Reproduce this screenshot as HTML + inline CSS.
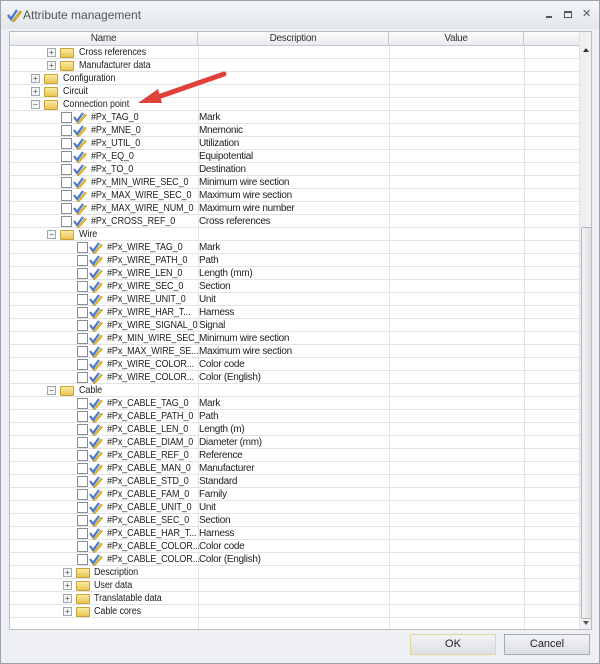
<!DOCTYPE html>
<html><head><meta charset="utf-8"><style>
*{margin:0;padding:0;box-sizing:border-box}
body{width:600px;height:664px;background:#fff;font-family:"Liberation Sans",sans-serif;font-size:10px;letter-spacing:-0.3px;color:#222;position:relative;overflow:hidden}
.win{position:absolute;left:0;top:0;width:600px;height:664px;background:#eef0f3;border:1px solid #9aa3ad}
.title{position:absolute;left:0;top:0;width:598px;height:28px;background:linear-gradient(#f4f6f8,#e2e6ea)}
.title span{position:absolute;left:22px;top:7px;font-size:12px;letter-spacing:0;color:#555}
.grid{position:absolute;left:8px;top:30px;width:583px;height:599px;background:#fff;border:1px solid #b9bec5;overflow:hidden}
.hdr{position:absolute;left:0;top:0;height:14px;width:570px;background:linear-gradient(#fbfbfc,#e9ebee);border-bottom:1px solid #c5c9cf}
.hdr div{position:absolute;top:0;height:13px;text-align:center;line-height:13px;color:#333;border-right:1px solid #c5c9cf}
.row{position:absolute;left:0;height:13px;width:570px;border-bottom:1px solid #e4e4e8}
.row .n{position:absolute;top:0;line-height:13px;white-space:nowrap;transform:scaleX(0.9);transform-origin:0 0;letter-spacing:-0.1px}
.row .d{position:absolute;left:189px;top:0;line-height:13px}
.vl{position:absolute;top:14px;height:585px;width:1px;background:#e4e4e8}
.ex{position:absolute;top:2px;width:9px;height:9px;border:1px solid #9aa;background:#f6f6f6;font-size:8px;letter-spacing:0;line-height:7px;text-align:center;color:#445}
.fo{position:absolute;top:2px;width:14px;height:10px;background:linear-gradient(#fbe9a6,#e9c451);border:1px solid #c9a236;border-radius:1px}
.cb{position:absolute;top:1px;width:11px;height:11px;border:1px solid #8a8f96;background:#fff}
.sb{position:absolute;left:569px;top:0;width:13px;height:597px;background:#f0f0f2;border-left:1px solid #e0e0e4}
.th{position:absolute;left:1px;top:195px;width:11px;height:392px;background:linear-gradient(90deg,#f4f4f6,#dcdde2);border:1px solid #b0b3ba;border-radius:2px}
.btn{position:absolute;top:633px;width:86px;height:21px;background:linear-gradient(#f2f3f5,#dde0e5);border:1px solid #a8adb5;text-align:center;line-height:19px;font-size:11px;letter-spacing:0;color:#222}
.c1 .n{left:81px}
.c2 .n{left:97px}
</style></head><body>
<div class="win">
<div class="title">
<svg style="position:absolute;left:5px;top:6px" width="16" height="16" viewBox="0 0 16 16"><path d="M2 8l3 4 6-9" stroke="#4a7ac8" stroke-width="2.4" fill="none"/><path d="M7 13l7-9 1.5 1.2-7 9-2 .5z" fill="#f0c030" stroke="#a07010" stroke-width=".6"/></svg>
<span>Attribute management</span>
<div style="position:absolute;left:545px;top:15px;width:6px;height:2px;background:#556"></div>
<div style="position:absolute;left:563px;top:10px;width:8px;height:7px;border:1px solid #556;border-top-width:2px"></div>
<div style="position:absolute;left:581px;top:6px;font-size:11px;color:#556">✕</div>
</div>
<div class="grid">
<div class="hdr"><div style="left:0;width:188px">Name</div><div style="left:188px;width:191px">Description</div><div style="left:379px;width:135px">Value</div><div style="left:514px;width:56px;border-right:none"></div></div>
<div class="vl" style="left:188px"></div><div class="vl" style="left:379px"></div><div class="vl" style="left:514px"></div>
<div class="row" style="top:14px"><div class="ex" style="left:37px">+</div><div class="fo" style="left:50px"></div><div class="n" style="left:69px">Cross references</div></div>
<div class="row" style="top:27px"><div class="ex" style="left:37px">+</div><div class="fo" style="left:50px"></div><div class="n" style="left:69px">Manufacturer data</div></div>
<div class="row" style="top:40px"><div class="ex" style="left:21px">+</div><div class="fo" style="left:34px"></div><div class="n" style="left:53px">Configuration</div></div>
<div class="row" style="top:53px"><div class="ex" style="left:21px">+</div><div class="fo" style="left:34px"></div><div class="n" style="left:53px">Circuit</div></div>
<div class="row" style="top:66px"><div class="ex" style="left:21px">−</div><div class="fo" style="left:34px"></div><div class="n" style="left:53px">Connection point</div></div>
<div class="row c1" style="top:79px"><div class="cb" style="left:51px"></div><div class="n">#Px_TAG_0</div><div class="d">Mark</div></div>
<div class="row c1" style="top:92px"><div class="cb" style="left:51px"></div><div class="n">#Px_MNE_0</div><div class="d">Mnemonic</div></div>
<div class="row c1" style="top:105px"><div class="cb" style="left:51px"></div><div class="n">#Px_UTIL_0</div><div class="d">Utilization</div></div>
<div class="row c1" style="top:118px"><div class="cb" style="left:51px"></div><div class="n">#Px_EQ_0</div><div class="d">Equipotential</div></div>
<div class="row c1" style="top:131px"><div class="cb" style="left:51px"></div><div class="n">#Px_TO_0</div><div class="d">Destination</div></div>
<div class="row c1" style="top:144px"><div class="cb" style="left:51px"></div><div class="n">#Px_MIN_WIRE_SEC_0</div><div class="d">Minimum wire section</div></div>
<div class="row c1" style="top:157px"><div class="cb" style="left:51px"></div><div class="n">#Px_MAX_WIRE_SEC_0</div><div class="d">Maximum wire section</div></div>
<div class="row c1" style="top:170px"><div class="cb" style="left:51px"></div><div class="n">#Px_MAX_WIRE_NUM_0</div><div class="d">Maximum wire number</div></div>
<div class="row c1" style="top:183px"><div class="cb" style="left:51px"></div><div class="n">#Px_CROSS_REF_0</div><div class="d">Cross references</div></div>
<div class="row" style="top:196px"><div class="ex" style="left:37px">−</div><div class="fo" style="left:50px"></div><div class="n" style="left:69px">Wire</div></div>
<div class="row c2" style="top:209px"><div class="cb" style="left:67px"></div><div class="n">#Px_WIRE_TAG_0</div><div class="d">Mark</div></div>
<div class="row c2" style="top:222px"><div class="cb" style="left:67px"></div><div class="n">#Px_WIRE_PATH_0</div><div class="d">Path</div></div>
<div class="row c2" style="top:235px"><div class="cb" style="left:67px"></div><div class="n">#Px_WIRE_LEN_0</div><div class="d">Length (mm)</div></div>
<div class="row c2" style="top:248px"><div class="cb" style="left:67px"></div><div class="n">#Px_WIRE_SEC_0</div><div class="d">Section</div></div>
<div class="row c2" style="top:261px"><div class="cb" style="left:67px"></div><div class="n">#Px_WIRE_UNIT_0</div><div class="d">Unit</div></div>
<div class="row c2" style="top:274px"><div class="cb" style="left:67px"></div><div class="n">#Px_WIRE_HAR_T...</div><div class="d">Harness</div></div>
<div class="row c2" style="top:287px"><div class="cb" style="left:67px"></div><div class="n">#Px_WIRE_SIGNAL_0</div><div class="d">Signal</div></div>
<div class="row c2" style="top:300px"><div class="cb" style="left:67px"></div><div class="n">#Px_MIN_WIRE_SEC_</div><div class="d">Minimum wire section</div></div>
<div class="row c2" style="top:313px"><div class="cb" style="left:67px"></div><div class="n">#Px_MAX_WIRE_SE...</div><div class="d">Maximum wire section</div></div>
<div class="row c2" style="top:326px"><div class="cb" style="left:67px"></div><div class="n">#Px_WIRE_COLOR...</div><div class="d">Color code</div></div>
<div class="row c2" style="top:339px"><div class="cb" style="left:67px"></div><div class="n">#Px_WIRE_COLOR...</div><div class="d">Color (English)</div></div>
<div class="row" style="top:352px"><div class="ex" style="left:37px">−</div><div class="fo" style="left:50px"></div><div class="n" style="left:69px">Cable</div></div>
<div class="row c2" style="top:365px"><div class="cb" style="left:67px"></div><div class="n">#Px_CABLE_TAG_0</div><div class="d">Mark</div></div>
<div class="row c2" style="top:378px"><div class="cb" style="left:67px"></div><div class="n">#Px_CABLE_PATH_0</div><div class="d">Path</div></div>
<div class="row c2" style="top:391px"><div class="cb" style="left:67px"></div><div class="n">#Px_CABLE_LEN_0</div><div class="d">Length (m)</div></div>
<div class="row c2" style="top:404px"><div class="cb" style="left:67px"></div><div class="n">#Px_CABLE_DIAM_0</div><div class="d">Diameter (mm)</div></div>
<div class="row c2" style="top:417px"><div class="cb" style="left:67px"></div><div class="n">#Px_CABLE_REF_0</div><div class="d">Reference</div></div>
<div class="row c2" style="top:430px"><div class="cb" style="left:67px"></div><div class="n">#Px_CABLE_MAN_0</div><div class="d">Manufacturer</div></div>
<div class="row c2" style="top:443px"><div class="cb" style="left:67px"></div><div class="n">#Px_CABLE_STD_0</div><div class="d">Standard</div></div>
<div class="row c2" style="top:456px"><div class="cb" style="left:67px"></div><div class="n">#Px_CABLE_FAM_0</div><div class="d">Family</div></div>
<div class="row c2" style="top:469px"><div class="cb" style="left:67px"></div><div class="n">#Px_CABLE_UNIT_0</div><div class="d">Unit</div></div>
<div class="row c2" style="top:482px"><div class="cb" style="left:67px"></div><div class="n">#Px_CABLE_SEC_0</div><div class="d">Section</div></div>
<div class="row c2" style="top:495px"><div class="cb" style="left:67px"></div><div class="n">#Px_CABLE_HAR_T...</div><div class="d">Harness</div></div>
<div class="row c2" style="top:508px"><div class="cb" style="left:67px"></div><div class="n">#Px_CABLE_COLOR...</div><div class="d">Color code</div></div>
<div class="row c2" style="top:521px"><div class="cb" style="left:67px"></div><div class="n">#Px_CABLE_COLOR...</div><div class="d">Color (English)</div></div>
<div class="row" style="top:534px"><div class="ex" style="left:53px">+</div><div class="fo" style="left:66px"></div><div class="n" style="left:84px">Description</div></div>
<div class="row" style="top:547px"><div class="ex" style="left:53px">+</div><div class="fo" style="left:66px"></div><div class="n" style="left:84px">User data</div></div>
<div class="row" style="top:560px"><div class="ex" style="left:53px">+</div><div class="fo" style="left:66px"></div><div class="n" style="left:84px">Translatable data</div></div>
<div class="row" style="top:573px"><div class="ex" style="left:53px">+</div><div class="fo" style="left:66px"></div><div class="n" style="left:84px">Cable cores</div></div>
<svg style="position:absolute;left:0;top:0" width="570" height="600">
<defs><g id="pi"><path d="M1 6l3 4 6-8" stroke="#4a7ac8" stroke-width="2.2" fill="none"/><path d="M5 11l7-8 1.5 1.2-7 8-2 .5z" fill="#f0c030" stroke="#a07010" stroke-width=".5"/></g></defs>
<use href="#pi" x="63" y="79"/><use href="#pi" x="63" y="92"/><use href="#pi" x="63" y="105"/><use href="#pi" x="63" y="118"/><use href="#pi" x="63" y="131"/><use href="#pi" x="63" y="144"/><use href="#pi" x="63" y="157"/><use href="#pi" x="63" y="170"/><use href="#pi" x="63" y="183"/>
<use href="#pi" x="79" y="209"/><use href="#pi" x="79" y="222"/><use href="#pi" x="79" y="235"/><use href="#pi" x="79" y="248"/><use href="#pi" x="79" y="261"/><use href="#pi" x="79" y="274"/><use href="#pi" x="79" y="287"/><use href="#pi" x="79" y="300"/><use href="#pi" x="79" y="313"/><use href="#pi" x="79" y="326"/><use href="#pi" x="79" y="339"/>
<use href="#pi" x="79" y="365"/><use href="#pi" x="79" y="378"/><use href="#pi" x="79" y="391"/><use href="#pi" x="79" y="404"/><use href="#pi" x="79" y="417"/><use href="#pi" x="79" y="430"/><use href="#pi" x="79" y="443"/><use href="#pi" x="79" y="456"/><use href="#pi" x="79" y="469"/><use href="#pi" x="79" y="482"/><use href="#pi" x="79" y="495"/><use href="#pi" x="79" y="508"/><use href="#pi" x="79" y="521"/>
<path d="M214 42L145 66" stroke="#e0413a" stroke-width="5" stroke-linecap="round"/>
<path d="M128 71l20-14 4 14z" fill="#e0413a"/>
</svg>
<div class="sb"><div style="position:absolute;left:3px;top:16px;border:3.5px solid transparent;border-bottom:4px solid #333;border-top:none"></div><div class="th"></div><div style="position:absolute;left:3px;top:589px;border:3.5px solid transparent;border-top:4px solid #555;border-bottom:none"></div></div>
</div>
<div class="btn" style="left:409px;border-color:#e3d69a">OK</div>
<div class="btn" style="left:503px">Cancel</div>
</div>
</body></html>
